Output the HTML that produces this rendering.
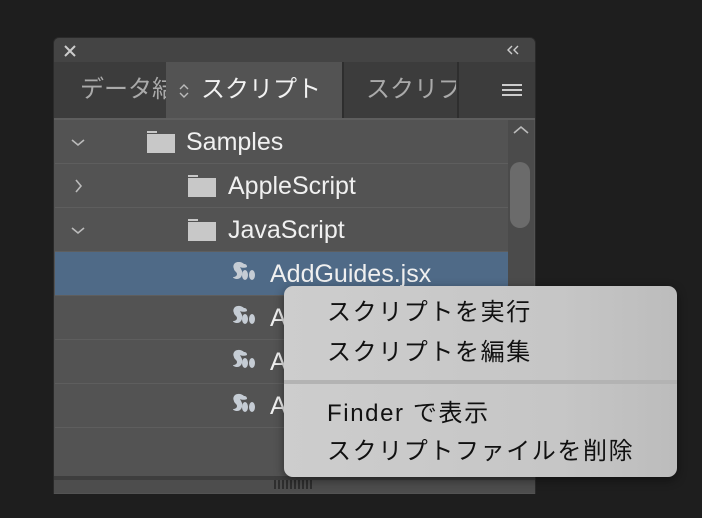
<!DOCTYPE html>
<html><head><meta charset="utf-8"><style>
*{margin:0;padding:0;box-sizing:border-box}
body{width:702px;height:518px;background:#1e1e1e;position:relative;overflow:hidden;font-family:"Liberation Sans","Noto Sans CJK JP",sans-serif}
.a{position:absolute}
.panel{left:53px;top:37px;width:483px;height:457px;background:#3a3a3a;border-radius:6px 6px 0 0;border:1px solid #2a2a2a}
.row{position:absolute;left:55px;width:453px;height:44px;border-bottom:1px solid #5e5e5e;background:#535353}
.t{position:absolute;color:#f0f0f0;font-size:25px;line-height:44px;top:0}
.folder{position:absolute;width:28px;height:19px;background:#c8c8c8;top:14px}
.folder:before{content:"";position:absolute;left:0;top:-3px;width:10px;height:2px;background:#c8c8c8}
.chev{position:absolute;left:14px;top:13px;width:18px;height:18px}
.mi{position:absolute;left:327px;font-size:24px;letter-spacing:1.6px;color:#111;font-family:"Liberation Sans","Noto Sans CJK JP",sans-serif}
</style></head><body>
<div class="a panel"></div>
<div class="a" style="left:54px;top:38px;width:481px;height:24px;background:#444;border-radius:5px 5px 0 0"></div>
<svg class="a" style="left:63px;top:44px" width="14" height="14"><path d="M2 2l10 10M12 2L2 12" stroke="#ccc" stroke-width="2"/></svg>
<svg class="a" style="left:505px;top:44px" width="16" height="12"><path d="M7 2l-4 4 4 4M13 2l-4 4 4 4" stroke="#ccc" stroke-width="1.4" fill="none"/></svg>
<div class="a" style="left:54px;top:62px;width:481px;height:56px;background:#3c3c3c"></div>
<div class="a" style="left:166px;top:62px;width:176px;height:56px;background:#535353"></div>
<div class="a" style="left:342px;top:62px;width:2px;height:56px;background:#2e2e2e"></div>
<div class="a" style="left:457px;top:62px;width:2px;height:56px;background:#2e2e2e"></div>
<div class="a" style="left:80px;top:62px;width:86px;overflow:hidden;white-space:nowrap;color:#aaa;font-size:24px;line-height:56px">データ結合</div>
<svg class="a" style="left:178px;top:82px" width="12" height="18"><path d="M2 7l4-4 4 4M2 11l4 4 4-4" stroke="#bbb" stroke-width="1.4" fill="none"/></svg>
<div class="a" style="left:201px;top:62px;color:#f2f2f2;font-size:24px;line-height:56px">スクリプト</div>
<div class="a" style="left:366px;top:62px;width:90px;overflow:hidden;white-space:nowrap;color:#aaa;font-size:24px;line-height:56px">スクリプトラベル</div>
<div class="a" style="left:502px;top:84px;width:20px;height:12px;border-top:2px solid #ccc;border-bottom:2px solid #ccc"></div>
<div class="a" style="left:502px;top:89px;width:20px;height:2px;background:#ccc"></div>
<div class="a" style="left:54px;top:118px;width:481px;height:376px;background:#535353"></div>
<div class="a" style="left:54px;top:118px;width:481px;height:2px;background:#5e5e5e"></div>
<div class="row" style="top:120px"><svg class="chev" viewBox="0 0 18 18"><path d="M3 7l6 5 6-5" stroke="#bbb" stroke-width="1.6" fill="none"/></svg><div class="folder" style="left:92px"></div><div class="t" style="left:131px">Samples</div></div>
<div class="row" style="top:164px"><svg class="chev" viewBox="0 0 18 18"><path d="M7 3l5 6-5 6" stroke="#bbb" stroke-width="1.6" fill="none"/></svg><div class="folder" style="left:133px"></div><div class="t" style="left:173px">AppleScript</div></div>
<div class="row" style="top:208px"><svg class="chev" viewBox="0 0 18 18"><path d="M3 7l6 5 6-5" stroke="#bbb" stroke-width="1.6" fill="none"/></svg><div class="folder" style="left:133px"></div><div class="t" style="left:173px">JavaScript</div></div>
<div class="row" style="top:252px;background:#4f6a87;border-bottom-color:#5e5e5e"><div class="t" style="left:215px">AddGuides.jsx</div></div>
<div class="row" style="top:296px"><div class="t" style="left:215px">A</div></div>
<div class="row" style="top:340px"><div class="t" style="left:215px">A</div></div>
<div class="row" style="top:384px"><div class="t" style="left:215px">A</div></div>
<svg class="a" style="left:230px;top:262px" width="30" height="160" viewBox="0 0 30 160">
<g id="ic" fill="#c5ccd4"><path d="M5 1c3-2 7-1 9 1 2 0 3 1 3 3-2 1-5 1-7 0l2 4c1 4-1 8-5 8-2 0-4-1-4-2 2 0 4-1 4-3 0-2-3-3-3-5-1-2-1-4 1-6z"/><ellipse cx="15" cy="13" rx="3" ry="5"/><ellipse cx="22" cy="13" rx="3" ry="5"/></g>
<use href="#ic" y="44"/><use href="#ic" y="88"/><use href="#ic" y="132"/>
</svg>
<div class="a" style="left:508px;top:120px;width:26px;height:356px;background:#4b4b4b"></div>
<svg class="a" style="left:511px;top:124px" width="20" height="12"><path d="M3 9l7-6 7 6" stroke="#bbb" stroke-width="1.6" fill="none"/></svg>
<div class="a" style="left:510px;top:162px;width:20px;height:66px;border-radius:10px;background:#6b6b6b"></div>
<div class="a" style="left:54px;top:476px;width:481px;height:4px;background:#3e3e3e"></div>
<div class="a" style="left:54px;top:480px;width:481px;height:13px;background:#4d4d4d"></div>
<div class="a" style="left:274px;top:480px;width:38px;height:9px;background:repeating-linear-gradient(90deg,#2e2e2e 0 2px,transparent 2px 4px)"></div>
<div class="a" style="left:284px;top:286px;width:393px;height:191px;border-radius:9px;background:linear-gradient(90deg,#cdcdcd,#c6c6c6 70%,#bcbcbc);box-shadow:0 3px 10px rgba(0,0,0,.45)"></div>
<div class="a" style="left:284px;top:380px;width:393px;height:4px;background:#b3b3b3"></div>
<div class="mi" style="top:292px">スクリプトを実行</div>
<div class="mi" style="top:332px">スクリプトを編集</div>
<div class="mi" style="top:393px">Finder で表示</div>
<div class="mi" style="top:431px">スクリプトファイルを削除</div>
</body></html>
